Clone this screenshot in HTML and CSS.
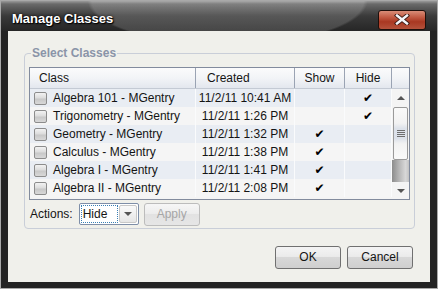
FILE: index.html
```html
<!DOCTYPE html>
<html lang="en-US">
<head>
    <meta charset="utf-8" />
    <title>Manage Classes</title>
    <link rel="stylesheet" href="styles.css">
</head>
<body>
<div class="window">
    <div class="titlebar">
        <span class="title">Manage Classes</span>
        <span class="close">
            <svg width="16" height="11" viewBox="0 0 16 11">
                <path d="M3 1.5 L13 9.5 M13 1.5 L3 9.5" stroke="#3a1a14" stroke-width="4.2" stroke-linecap="square"/>
                <path d="M3 1.5 L13 9.5 M13 1.5 L3 9.5" stroke="#f4f6fa" stroke-width="2.4" stroke-linecap="square"/>
            </svg>
        </span>
    </div>
    <div class="client">
        <fieldset class="group">
            <legend>Select Classes</legend>
            <div class="list">
                <div class="head">
                    <div class="hcell c-class">Class</div>
                    <div class="hcell c-created">Created</div>
                    <div class="hcell c-mid">Show</div>
                    <div class="hcell c-mid">Hide</div>
                    <div class="hcell c-pad"></div>
                </div>
                <div class="body">
                    <div class="rows">
                        <div class="row"><div class="cell c-class"><span class="box"></span>Algebra 101 - MGentry</div><div class="cell c-date">11/2/11 10:41 AM</div><div class="cell c-mid"></div><div class="cell c-mid">&#10004;</div></div>
                        <div class="row"><div class="cell c-class"><span class="box"></span>Trigonometry - MGentry</div><div class="cell c-date">11/2/11 1:26 PM</div><div class="cell c-mid"></div><div class="cell c-mid">&#10004;</div></div>
                        <div class="row"><div class="cell c-class"><span class="box"></span>Geometry - MGentry</div><div class="cell c-date">11/2/11 1:32 PM</div><div class="cell c-mid">&#10004;</div><div class="cell c-mid"></div></div>
                        <div class="row"><div class="cell c-class"><span class="box"></span>Calculus - MGentry</div><div class="cell c-date">11/2/11 1:38 PM</div><div class="cell c-mid">&#10004;</div><div class="cell c-mid"></div></div>
                        <div class="row"><div class="cell c-class"><span class="box"></span>Algebra I - MGentry</div><div class="cell c-date">11/2/11 1:41 PM</div><div class="cell c-mid">&#10004;</div><div class="cell c-mid"></div></div>
                        <div class="row"><div class="cell c-class"><span class="box"></span>Algebra II - MGentry</div><div class="cell c-date">11/2/11 2:08 PM</div><div class="cell c-mid">&#10004;</div><div class="cell c-mid"></div></div>
                    </div>
                    <div class="scrollbar">
                        <div class="arrow"><span class="tri-up"></span></div>
                        <div class="thumb"><span class="grip"></span></div>
                        <div class="track"></div>
                        <div class="arrow"><span class="tri-down"></span></div>
                    </div>
                </div>
            </div>
            <div class="actions">
                <span class="label">Actions:</span>
                <div class="combo">
                    <span class="combo-text">Hide</span>
                    <span class="combo-btn"><span class="tri-down"></span></span>
                </div>
                <div class="button disabled">Apply</div>
            </div>
        </fieldset>
        <div class="footer">
            <div class="button">OK</div>
            <div class="button">Cancel</div>
        </div>
    </div>
</div>
</body>
</html>
```

FILE: styles.css
```css
body {margin:0; background:#d4d4d4; font-family:"Liberation Sans", Arial, sans-serif; font-size:12px; color:#141414;}
.window {width:436px; height:287px; border:1px solid #a9a9a9; background:#232323; display:flex; flex-direction:column;}
.titlebar {height:30px; display:flex; align-items:center; justify-content:space-between; padding:0 11px 0 11px;
    background: radial-gradient(ellipse 140px 44px at 52% 0px, rgba(255,255,255,.15) 0 97%, rgba(255,255,255,0) 100%),
                linear-gradient(#9a9a9a, #6a6a6a 3px, #555 8px, #3a3a3a 15px, #262626 30px);}
.title {color:#fff; font-weight:bold; font-size:13px; text-shadow:1px 1px 1px #000, 0 0 3px #000; margin-top:5px;}
.close {width:46px; height:18px; margin-top:7px; border:1px solid #1e0f0b; border-radius:3px; display:flex; align-items:center; justify-content:center;
    background:linear-gradient(#d98d78, #c25a43 35%, #a93822 60%, #b5523b);}
.close svg {display:block;}
.client {flex:1; margin:0 7px 6px 7px; background:#f0f0eb; display:flex; flex-direction:column; padding-top:15px;}

.group {margin:0 15px 0 16px; padding:7px 4px 3px 4px; border:1px solid #c9ced8; border-radius:4px;}
.group legend {padding:0 1px; margin-left:2px; font-weight:bold; font-size:12px; line-height:14px; color:#8a94a8;}

.list {border:1px solid #828b9d; background:#f4f4f4;}
.head {display:flex; height:20px; border-bottom:1px solid #c4cad4; background:linear-gradient(#fbfbfc, #f2f4f7 50%, #e3e7ee);}
.hcell {line-height:20px; border-right:1px solid #9aa3b3; box-sizing:border-box;}
.c-class {width:166px; padding-left:9px;}
.c-created {width:99px; padding-left:11px;}
.c-mid {width:50px; text-align:center;}
.hcell.c-mid + .hcell.c-mid {width:47px;}
.c-pad {flex:1; border-right:none;}
.body {display:flex;}
.rows {width:362px;}
.row {display:flex; height:18px; line-height:18px;}
.row:nth-child(odd) {background:#e9edf3;}
.row:nth-child(even) {background:#f5f5f5;}
.cell {border-right:1px solid #fafbfc; box-sizing:border-box; white-space:nowrap;}
.cell.c-class {display:flex; align-items:center; padding-left:4px;}
.c-date {width:99px; text-align:center;}
.cell.c-mid {font-family:"DejaVu Sans", sans-serif; font-size:12px; color:#000;}
.cell.c-mid + .cell.c-mid {width:47px;}
.box {width:11px; height:11px; border:1px solid #8c8c8c; border-radius:2px; margin-right:6px;
    background:linear-gradient(#f2f2f2, #dcdcdc 45%, #c8c8c8 55%, #d8d8d8);}

.scrollbar {flex:1; display:flex; flex-direction:column; background:#f4f4f4;}
.arrow {height:18px; display:flex; align-items:center; justify-content:center;}
.arrow:last-child {height:17px;}
.tri-up {border:4px solid transparent; border-bottom:4px solid #555; border-top:none; width:0; height:0;}
.tri-down {border:4px solid transparent; border-top:4px solid #555; border-bottom:none; width:0; height:0;}
.thumb {height:51px; margin:0 1px; border:1px solid #9a9a9a; border-radius:2px; display:flex; align-items:center; justify-content:center;
    background:linear-gradient(#fafafa, #f2f2f2 30%, #dde2ea 40%, #dde2ea 60%, #f2f2f2 70%, #fafafa);}
.grip {width:8px; height:7px; background:repeating-linear-gradient(#6e6e6e 0 1px, transparent 1px 2px);}
.track {height:22px; background:linear-gradient(90deg, #8c8c8c, #b4b4b4 40%, #d8d8d8 80%, #c2c2c2);}

.actions {display:flex; align-items:center; margin-top:3px; height:22px;}
.label {margin:0 6px 0 1px;}
.combo {width:56px; height:20px; border:1px solid #7e8ea8; border-radius:2px; background:#fff; display:flex; align-items:center; padding:0 1px;}
.combo-text {flex:1; height:16px; line-height:16px; border:1px dotted #3a7fb4; padding-left:1px;}
.combo-btn {width:16px; height:16px; margin-left:1px; border:1px solid #c8c8c8; border-radius:2px; display:flex; align-items:center; justify-content:center;
    background:linear-gradient(#fafafa, #e6e6e6);}
.button {height:21px; line-height:21px; border:1px solid #707070; border-radius:3px; text-align:center; box-sizing:content-box;
    background:linear-gradient(#f4f4f4, #ebebeb 45%, #d8d8d8 50%, #cfcfcf);}
.actions .button {width:54px; margin-left:5px;}
.button.disabled {color:#a6a6a6; border-color:#bcbcbc; background:linear-gradient(#f6f6f6, #ededed 45%, #e2e2e2 50%, #e6e6e6);}
.footer {display:flex; justify-content:flex-end; gap:6px; margin:17px 17px 0 0;}
.footer .button {width:64px;}
```
